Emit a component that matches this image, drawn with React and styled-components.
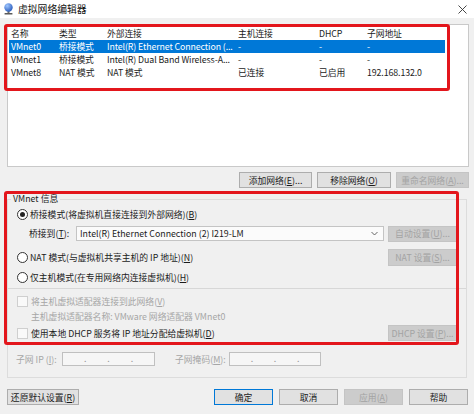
import styled, { createGlobalStyle } from "styled-components"

const GlobalStyle = createGlobalStyle`
  html, body { margin: 0; padding: 0; }
  body {
    background: #f0f0f0;
    font-family: "Noto Sans CJK SC", "Noto Sans", sans-serif;
    font-size: 8.8px;
    color: #1b1b1b;
  }
  * { box-sizing: border-box; }
`

const columns = [48, 48, 131, 81, 48, 80]

const networks = [
  { name: "VMnet0", type: "桥接模式", ext: "Intel(R) Ethernet Connection (...", host: "-", dhcp: "-", subnet: "-", selected: true },
  { name: "VMnet1", type: "桥接模式", ext: "Intel(R) Dual Band Wireless-A...", host: "-", dhcp: "-", subnet: "-" },
  { name: "VMnet8", type: "NAT 模式", ext: "NAT 模式", host: "已连接", dhcp: "已启用", subnet: "192.168.132.0" },
]

const Window = styled.div`
  position: relative;
  width: 474px;
  height: 414px;
  overflow: hidden;
  background: #f0f0f0;
`

const TitleBar = styled.div`
  height: 18px;
  background: #fff;
  display: flex;
  align-items: center;
  gap: 4px;
  padding-left: 3px;
  font-size: 9.8px;
  color: #111;
`

const CloseIcon = styled.svg`
  margin-left: auto;
  margin-right: 7px;
`

const Body = styled.div`
  padding: 6px 5px 0 7px;
`

const ListView = styled.div`
  height: 143px;
  background: #fff;
  border: 1px solid #c9c9c9;
  padding: 0 0 0 1px;
`

const Row = styled.div`
  display: flex;
  height: ${({ $head }) => ($head ? "15px" : "13px")};
  align-items: center;
  width: 436px;
  background: ${({ $selected }) => ($selected ? "#0078d7" : "transparent")};
  color: ${({ $selected }) => ($selected ? "#fff" : "#1b1b1b")};
  white-space: nowrap;
  padding-top: ${({ $head }) => ($head ? "1px" : "0")};
`

const Cell = styled.div`
  flex: none;
  padding-left: 2px;
  overflow: hidden;
  line-height: 13px;
  letter-spacing: -0.1px;
`

const ButtonRow = styled.div`
  display: flex;
  justify-content: flex-end;
  gap: 5px;
  margin-top: 5px;
`

const Button = styled.div`
  flex: none;
  width: ${({ $w }) => $w}px;
  height: ${({ $h }) => $h || 16}px;
  display: flex;
  align-items: center;
  justify-content: center;
  white-space: nowrap;
  background: ${({ $disabled }) => ($disabled ? "#cccccc" : "#e1e1e1")};
  border: 1px solid ${({ $disabled, $primary }) => ($primary ? "#0078d7" : $disabled ? "#c4c4c4" : "#adadad")};
  color: ${({ $disabled }) => ($disabled ? "#a3a3a3" : "#1b1b1b")};
  margin-left: ${({ $push }) => ($push ? "auto" : "0")};
`

const Group = styled.fieldset`
  width: 460px;
  margin: 5px 0 0 0;
  padding: 0 9px 10px 9px;
  border: 1px solid #dcdcdc;
  min-width: 0;
`

const Legend = styled.legend`
  padding: 0 2px;
  margin-left: -6px;
  line-height: 12px;
`

const Line = styled.div`
  display: flex;
  align-items: center;
  height: ${({ $h }) => $h}px;
  margin-top: ${({ $mt }) => $mt || 0}px;
  padding-left: ${({ $pl }) => $pl || 0}px;
  white-space: nowrap;
  color: ${({ $disabled }) => ($disabled ? "#a6a6a6" : "#1b1b1b")};
`

const Radio = styled.span`
  flex: none;
  width: 11px;
  height: 11px;
  border-radius: 50%;
  border: 1px solid #333;
  background: #fff;
  margin-right: 2px;
  display: flex;
  align-items: center;
  justify-content: center;
  &::after {
    content: "";
    width: 5px;
    height: 5px;
    border-radius: 50%;
    background: ${({ $checked }) => ($checked ? "#222" : "transparent")};
  }
`

const Check = styled.span`
  flex: none;
  width: 11px;
  height: 11px;
  border: 1px solid #cfcfcf;
  background: #f9f9f9;
  margin-right: 3px;
`

const Label = styled.span`
  flex: none;
  width: ${({ $w }) => ($w ? `${$w}px` : "auto")};
  margin-left: ${({ $ml }) => $ml || 0}px;
`

const Select = styled.div`
  flex: none;
  width: 308px;
  height: 15px;
  border: 1px solid #c4c4c4;
  background: #fbfbfb;
  display: flex;
  align-items: center;
  padding: 0 5px 0 3px;
  color: #1b1b1b;
`

const Chevron = styled.svg`
  margin-left: auto;
`

const Separator = styled.div`
  height: 1px;
  background: #d7d7d7;
  margin: 3px -9px 0 -9px;
`

const IpBox = styled.div`
  flex: none;
  width: ${({ $w }) => $w}px;
  height: 14px;
  border: 1px solid #c0c0c0;
  background: #f6f6f6;
  display: flex;
  justify-content: space-evenly;
  align-items: center;
  color: #9a9a9a;
  line-height: 10px;
  margin-left: ${({ $ml }) => $ml || 0}px;
`

const Footer = styled.div`
  display: flex;
  align-items: center;
  margin-top: 11px;
  margin-right: 1px;
`

const FooterRight = styled.div`
  display: flex;
  gap: 6px;
  margin-left: auto;
`

const Highlight = styled.div`
  position: absolute;
  left: ${({ $x }) => $x}px;
  top: ${({ $y }) => $y}px;
  width: ${({ $w }) => $w}px;
  height: ${({ $h }) => $h}px;
  border: 3px solid #e3161c;
  border-radius: 3px;
  pointer-events: none;
`

const NetIcon = () => (
  <svg width="11" height="12" viewBox="0 0 11 12">
    <defs>
      <radialGradient id="g" cx="0.35" cy="0.3" r="0.8">
        <stop offset="0" stopColor="#9fc7ff" />
        <stop offset="1" stopColor="#2154b8" />
      </radialGradient>
    </defs>
    <rect x="4.5" y="8" width="2" height="2" fill="#6b6b6b" />
    <rect x="1.5" y="10" width="8" height="1.6" rx="0.5" fill="#5a5a5a" />
    <circle cx="5.5" cy="4.5" r="4.2" fill="url(#g)" />
  </svg>
)

const U = styled.u`
  text-decoration: underline;
  text-underline-offset: 1px;
`

const App = () => {
  return (
    <Window>
      <GlobalStyle />
      <TitleBar>
        <NetIcon />
        <span>虚拟网络编辑器</span>
        <CloseIcon width="9" height="9" viewBox="0 0 9 9">
          <path d="M0.5 0.5 L8.5 8.5 M8.5 0.5 L0.5 8.5" stroke="#333" strokeWidth="0.9" />
        </CloseIcon>
      </TitleBar>

      <Body>
        <ListView>
          <Row $head>
            {["名称", "类型", "外部连接", "主机连接", "DHCP", "子网地址"].map((h, i) => (
              <Cell key={h} style={{ width: columns[i] }}>{h}</Cell>
            ))}
          </Row>
          {networks.map((n) => (
            <Row key={n.name} $selected={n.selected}>
              {[n.name, n.type, n.ext, n.host, n.dhcp, n.subnet].map((v, i) => (
                <Cell key={i} style={{ width: columns[i] }}>{v}</Cell>
              ))}
            </Row>
          ))}
        </ListView>

        <ButtonRow>
          <Button $w={73}>添加网络(<U>E</U>)...</Button>
          <Button $w={74}>移除网络(<U>O</U>)</Button>
          <Button $w={73} $disabled>重命名网络(<U>A</U>)...</Button>
        </ButtonRow>

        <Group>
          <Legend>VMnet 信息</Legend>
          <Line $h={16} $mt={1}>
            <Radio $checked />
            <span>桥接模式(将虚拟机直接连接到外部网络)(<U>B</U>)</span>
          </Line>
          <Line $h={17} $mt={3} $pl={12}>
            <Label $w={47}>桥接到(<U>T</U>):</Label>
            <Select>
              <span>Intel(R) Ethernet Connection (2) I219-LM</span>
              <Chevron width="7" height="5" viewBox="0 0 7 5">
                <path d="M0.5 1 L3.5 4 L6.5 1" fill="none" stroke="#555" strokeWidth="0.9" />
              </Chevron>
            </Select>
            <Button $w={69} $disabled $push>自动设置(<U>U</U>)...</Button>
          </Line>
          <Line $h={17} $mt={7}>
            <Radio />
            <span>NAT 模式(与虚拟机共享主机的 IP 地址)(<U>N</U>)</span>
            <Button $w={69} $h={17} $disabled $push>NAT 设置(<U>S</U>)...</Button>
          </Line>
          <Line $h={16} $mt={3}>
            <Radio />
            <span>仅主机模式(在专用网络内连接虚拟机)(<U>H</U>)</span>
          </Line>
          <Separator />
          <Line $h={16} $mt={4} $disabled>
            <Check />
            <span>将主机虚拟适配器连接到此网络(<U>V</U>)</span>
          </Line>
          <Line $h={14} $pl={14} $disabled>
            主机虚拟适配器名称: VMware 网络适配器 VMnet0
          </Line>
          <Line $h={16} $mt={2}>
            <Check />
            <span>使用本地 DHCP 服务将 IP 地址分配给虚拟机(<U>D</U>)</span>
            <Button $w={69} $disabled $push>DHCP 设置(<U>P</U>)...</Button>
          </Line>
          <Line $h={16} $mt={10} $disabled>
            <Label $w={46} $ml={-1}>子网 IP (<U>I</U>):</Label>
            <IpBox $w={93}><span>.</span><span>.</span><span>.</span></IpBox>
            <Label $w={54} $ml={20}>子网掩码(<U>M</U>):</Label>
            <IpBox $w={92}><span>.</span><span>.</span><span>.</span></IpBox>
          </Line>
        </Group>

        <Footer>
          <Button $w={72}>还原默认设置(<U>R</U>)</Button>
          <FooterRight>
            <Button $w={59} $primary>确定</Button>
            <Button $w={59}>取消</Button>
            <Button $w={59} $disabled>应用(<U>A</U>)</Button>
            <Button $w={59}>帮助</Button>
          </FooterRight>
        </Footer>
      </Body>

      <Highlight $x={4} $y={24} $w={446} $h={67} />
      <Highlight $x={4} $y={191} $w={455} $h={154} />
    </Window>
  )
}

export default App
